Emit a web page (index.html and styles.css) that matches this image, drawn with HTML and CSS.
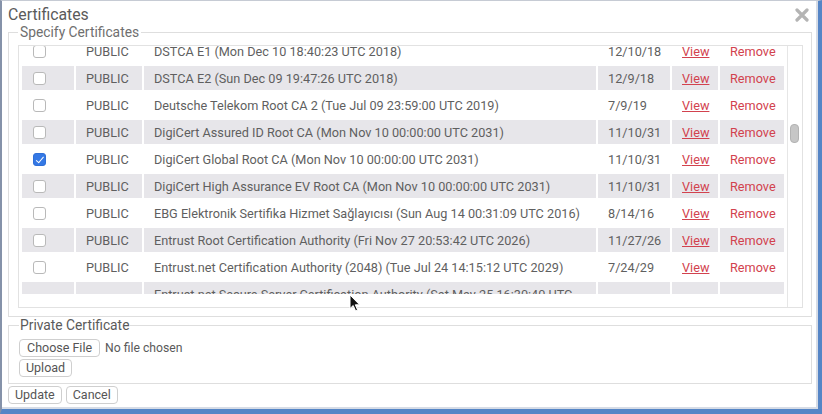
FILE: index.html
```html
<!DOCTYPE html>
<html>
<head>
<meta charset="utf-8">
<title>Certificates</title>
<link rel="stylesheet" href="styles.css">
</head>
<body>
<div class="window">
  <div class="dialog">
    <div class="titlebar">
      <span class="title">Certificates</span>
      <svg class="close" width="14" height="14" viewBox="0 0 14 14"><path d="M2 2 L12 12 M12 2 L2 12" stroke="#b4b4b4" stroke-width="3.2" stroke-linecap="round"/></svg>
    </div>
    <fieldset class="fs fs-specify">
      <legend>Specify Certificates</legend>
      <div class="scrollbox">
        <div class="viewport-col">
          <div class="viewport">
            <table class="certs">
              <colgroup><col class="c-cb"><col class="c-type"><col class="c-name"><col class="c-date"><col class="c-view"><col class="c-rm"></colgroup>
              <tbody>
                <tr><td><input type="checkbox" class="cb"></td><td>PUBLIC</td><td class="name">DSTCA E1 (Mon Dec 10 18:40:23 UTC 2018)</td><td>12/10/18</td><td><a class="view" href="#">View</a></td><td><a class="rm" href="#">Remove</a></td></tr>
                <tr class="alt"><td><input type="checkbox" class="cb"></td><td>PUBLIC</td><td class="name">DSTCA E2 (Sun Dec 09 19:47:26 UTC 2018)</td><td>12/9/18</td><td><a class="view" href="#">View</a></td><td><a class="rm" href="#">Remove</a></td></tr>
                <tr><td><input type="checkbox" class="cb"></td><td>PUBLIC</td><td class="name">Deutsche Telekom Root CA 2 (Tue Jul 09 23:59:00 UTC 2019)</td><td>7/9/19</td><td><a class="view" href="#">View</a></td><td><a class="rm" href="#">Remove</a></td></tr>
                <tr class="alt"><td><input type="checkbox" class="cb"></td><td>PUBLIC</td><td class="name">DigiCert Assured ID Root CA (Mon Nov 10 00:00:00 UTC 2031)</td><td>11/10/31</td><td><a class="view" href="#">View</a></td><td><a class="rm" href="#">Remove</a></td></tr>
                <tr><td><input type="checkbox" class="cb" checked></td><td>PUBLIC</td><td class="name">DigiCert Global Root CA (Mon Nov 10 00:00:00 UTC 2031)</td><td>11/10/31</td><td><a class="view" href="#">View</a></td><td><a class="rm" href="#">Remove</a></td></tr>
                <tr class="alt"><td><input type="checkbox" class="cb"></td><td>PUBLIC</td><td class="name">DigiCert High Assurance EV Root CA (Mon Nov 10 00:00:00 UTC 2031)</td><td>11/10/31</td><td><a class="view" href="#">View</a></td><td><a class="rm" href="#">Remove</a></td></tr>
                <tr><td><input type="checkbox" class="cb"></td><td>PUBLIC</td><td class="name">EBG Elektronik Sertifika Hizmet Sağlayıcısı (Sun Aug 14 00:31:09 UTC 2016)</td><td>8/14/16</td><td><a class="view" href="#">View</a></td><td><a class="rm" href="#">Remove</a></td></tr>
                <tr class="alt"><td><input type="checkbox" class="cb"></td><td>PUBLIC</td><td class="name">Entrust Root Certification Authority (Fri Nov 27 20:53:42 UTC 2026)</td><td>11/27/26</td><td><a class="view" href="#">View</a></td><td><a class="rm" href="#">Remove</a></td></tr>
                <tr><td><input type="checkbox" class="cb"></td><td>PUBLIC</td><td class="name">Entrust.net Certification Authority (2048) (Tue Jul 24 14:15:12 UTC 2029)</td><td>7/24/29</td><td><a class="view" href="#">View</a></td><td><a class="rm" href="#">Remove</a></td></tr>
                <tr class="alt"><td><input type="checkbox" class="cb"></td><td>PUBLIC</td><td class="name">Entrust.net Secure Server Certification Authority (Sat May 25 16:30:40 UTC 2019)</td><td>5/25/19</td><td><a class="view" href="#">View</a></td><td><a class="rm" href="#">Remove</a></td></tr>
              </tbody>
            </table>
          </div>
        </div>
        <div class="scrollbar"><div class="thumb"></div></div>
      </div>
    </fieldset>
    <fieldset class="fs fs-private">
      <legend>Private Certificate</legend>
      <div class="file-row">
        <button class="btn btn-choose" type="button">Choose File</button>
        <span class="nofile">No file chosen</span>
      </div>
      <div class="upload-row">
        <button class="btn" type="button">Upload</button>
      </div>
    </fieldset>
    <div class="footer">
      <button class="btn" type="button">Update</button>
      <button class="btn" type="button">Cancel</button>
    </div>
  </div>
  <svg class="cursor" width="12" height="18" viewBox="0 0 12 18"><path d="M1 1 L1 14.5 L4.2 11.5 L6.6 16.8 L8.6 15.9 L6.3 10.8 L10.6 10.8 Z" fill="#111" stroke="#fff" stroke-width="1"/></svg>
</div>
</body>
</html>
```
FILE: styles.css
```css
html, body {
  margin: 0;
  padding: 0;
  background: #fff;
}
body {
  font-family: Roboto, "Liberation Sans", Arial, sans-serif;
  color: #5e5e5e;
}
.window {
  position: relative;
  width: 822px;
  height: 414px;
  box-sizing: border-box;
  border-left: 2px solid #8592a9;
  border-top: 1px solid #c6cbd4;
  border-right: 4px solid #5585c6;
  border-bottom: 5px solid #5585c6;
}
.dialog {
  height: 100%;
  box-sizing: border-box;
  border-right: 2px solid #d6dce6;
  border-bottom: 2px solid #d6dce6;
  background: #fff;
  display: flex;
  flex-direction: column;
}
.titlebar {
  display: flex;
  justify-content: space-between;
  align-items: flex-start;
  height: 23px;
  box-sizing: border-box;
  padding: 5px 0 0 6px;
  flex: none;
}
.title {
  font-size: 15.8px;
  line-height: 18px;
  color: #5a5a5a;
}
.close {
  margin: 2px 7px 0 0;
}
.fs {
  border: 1px solid #dedede;
  margin: 0 4px 0 6px;
  min-width: 0;
  flex: none;
}
.fs legend {
  padding: 0 2px;
  font-size: 13.8px;
  line-height: 16px;
}
.fs-specify {
  padding: 5px 8px 8px 9px;
}
.fs-specify legend {
  color: #6f6f6f;
}
.fs-private {
  padding: 6px 8px 6px 10px;
}
.fs-private legend {
  color: #5a5a5a;
  padding: 0 1px;
}
.scrollbox {
  display: flex;
  height: 263px;
  box-sizing: border-box;
  border: 1px solid #e2e2e2;
}
.viewport-col {
  flex: 1;
  min-width: 0;
}
.viewport {
  height: 248px;
  overflow: hidden;
}
.certs {
  margin: -10px 0 0 1px;
  width: 766px;
  table-layout: fixed;
  border-spacing: 2px 3px;
  font-size: 12.7px;
  line-height: 15px;
  color: #5f5f5f;
}
.c-cb { width: 52px; }
.c-type { width: 66px; }
.c-name { width: 452px; }
.c-date { width: 72px; }
.c-view { width: 46px; }
.c-rm { width: 64px; }
.certs td {
  padding: 5px 6px 4px 10px;
  vertical-align: middle;
  white-space: nowrap;
}
.certs td.name {
  white-space: normal;
  padding-right: 3px;
}
.certs td:first-child {
  padding-left: 11px;
  padding-top: 3px;
  padding-bottom: 2px;
}
.certs tr.alt td {
  background: #e7e6ea;
}
.cb {
  -webkit-appearance: none;
  appearance: none;
  display: block;
  position: relative;
  width: 13px;
  height: 13px;
  margin: 0;
  box-sizing: border-box;
  border: 1px solid #b9b9b9;
  border-radius: 3px;
  background: #fff;
}
.cb:checked {
  background: #3478e5;
  border-color: #2f6fd6;
}
.cb:checked::after {
  content: "";
  position: absolute;
  left: 3.5px;
  top: 1px;
  width: 3px;
  height: 6.5px;
  border: solid #fff;
  border-width: 0 1.6px 1.6px 0;
  transform: rotate(40deg);
}
.view, .rm {
  color: #d2424e;
}
.view {
  text-decoration: underline;
}
.rm {
  text-decoration: none;
}
.scrollbar {
  width: 14px;
  flex: none;
  border-left: 1px solid #e6e6e6;
}
.thumb {
  width: 7px;
  height: 17px;
  margin: 78px 0 0 2px;
  background: #c6c6c6;
  border: 1px solid #b3b3b3;
  border-radius: 4px;
}
.file-row {
  display: flex;
  align-items: center;
  gap: 5px;
}
.upload-row {
  margin-top: 2px;
  display: flex;
}
.btn {
  font-family: Roboto, "Liberation Sans", Arial, sans-serif;
  font-size: 12.5px;
  line-height: 16px;
  height: 18px;
  padding: 0 6px;
  box-sizing: border-box;
  border: 1px solid #cfcfcf;
  border-radius: 4px;
  background: #fff;
  color: #555;
}
.btn-choose {
  padding: 0 7px;
}
.nofile {
  font-size: 12.2px;
  color: #5a5a5a;
}
.footer {
  display: flex;
  gap: 4px;
  padding-left: 6px;
  margin-top: 2px;
}
.cursor {
  position: absolute;
  left: 347px;
  top: 293px;
}
```
